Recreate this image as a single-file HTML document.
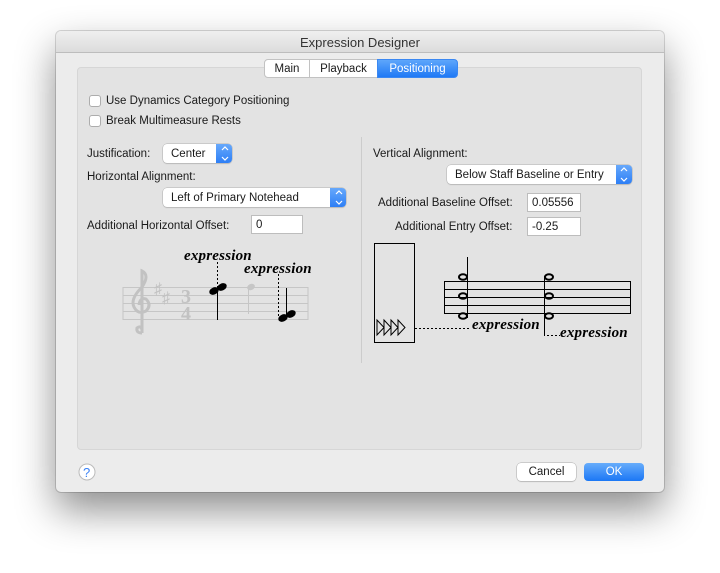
<!DOCTYPE html>
<html><head><style>
*{margin:0;padding:0;box-sizing:border-box}
body{width:720px;height:573px;background:#fff;position:relative;overflow:hidden;font-family:"Liberation Sans",sans-serif;font-size:11.5px;color:#1a1a1a}
.win{position:absolute;left:56px;top:31px;width:608px;height:461px;background:#ececec;border-radius:5px;box-shadow:0 18px 40px rgba(0,0,0,.45),0 0 0 1px rgba(0,0,0,.15)}
.title{position:absolute;left:0;top:0;width:608px;height:22px;background:linear-gradient(#efefef,#dcdcdc);border-bottom:1px solid #bdbdbd;border-radius:5px 5px 0 0;text-align:center;line-height:24px;font-size:13px;color:#333}
.a{position:absolute;white-space:nowrap}
.box{position:absolute;left:77px;top:67px;width:565px;height:383px;background:#e3e3e3;border:1px solid #d6d6d6;border-radius:4px}
.cb{position:absolute;width:12px;height:12px;background:#fff;border:1px solid #adadad;border-radius:3px}
.pop{position:absolute;height:19px;background:#fff;border-radius:4px;box-shadow:0 0 0 .5px #b0b0b0,0 1px 1px rgba(0,0,0,.15);padding-left:8px;line-height:20px}
.pop i{position:absolute;right:0;top:0;width:16px;height:19px;background:linear-gradient(#66a8fb,#2d7ff6);border-radius:0 4px 4px 0}
.fld{position:absolute;height:19px;background:#fff;border:1px solid #bdbdbd;padding-left:4px;line-height:18px}
.tab{position:absolute;top:59px;height:19px;line-height:19px;text-align:center;background:#fff;border:1px solid #c2c2c2}
</style></head><body>
<div class="win">
<div class="title">Expression Designer</div>
</div>
<div class="box"></div>
<div class="tab" style="left:264px;width:46px;border-radius:4px 0 0 4px">Main</div>
<div class="tab" style="left:309px;width:69px">Playback</div>
<div class="tab" style="left:377px;width:81px;border-radius:0 4px 4px 0;background:linear-gradient(#5ea6fb,#1f79f5);color:#fff;border-color:#3b88f2">Positioning</div>
<div class="cb" style="left:89px;top:95px"></div><div class="a" style="left:106px;top:95px">Use Dynamics Category Positioning</div>
<div class="cb" style="left:89px;top:115px"></div><div class="a" style="left:106px;top:115px">Break Multimeasure Rests</div>
<div style="position:absolute;left:361px;top:137px;width:1px;height:226px;background:#ccc"></div>
<div class="a" style="left:87px;top:148px">Justification:</div>
<div class="pop" style="left:163px;top:144px;width:69px">Center<i></i></div>
<div class="a" style="left:87px;top:171px">Horizontal Alignment:</div>
<div class="pop" style="left:163px;top:188px;width:183px">Left of Primary Notehead<i></i></div>
<div class="a" style="left:87px;top:220px">Additional Horizontal Offset:</div>
<div class="fld" style="left:251px;top:215px;width:52px">0</div>
<div class="a" style="left:373px;top:148px">Vertical Alignment:</div>
<div class="pop" style="left:447px;top:165px;width:185px">Below Staff Baseline or Entry<i></i></div>
<div class="a" style="left:378px;top:197px">Additional Baseline Offset:</div>
<div class="fld" style="left:527px;top:193px;width:54px">0.05556</div>
<div class="a" style="left:395px;top:221px">Additional Entry Offset:</div>
<div class="fld" style="left:527px;top:217px;width:54px">-0.25</div>
<svg class="a" style="left:0;top:0" width="720" height="573">
<g fill="none" stroke="#fff" stroke-width="1.2">
<path d="M222 150 l3 -3 3 3 M222 157 l3 3 3 -3"/>
<path d="M336 194 l3 -3 3 3 M336 201 l3 3 3 -3"/>
<path d="M621 171 l3 -3 3 3 M621 178 l3 3 3 -3"/>
</g>
<g stroke="#c6c6c6" stroke-width="1">
<line x1="123" y1="287.5" x2="308" y2="287.5"/><line x1="123" y1="295.5" x2="308" y2="295.5"/><line x1="123" y1="303.5" x2="308" y2="303.5"/><line x1="123" y1="311.5" x2="308" y2="311.5"/><line x1="123" y1="319.5" x2="308" y2="319.5"/>
<line x1="123" y1="287" x2="123" y2="320"/><line x1="308" y1="287" x2="308" y2="320"/>
<line x1="248.5" y1="288" x2="248.5" y2="314"/>
</g>
<path d="M142 333 q-6 0 -5 -5 q4 -3 5 2 M142 333 l0 -62 q8 4 0 16 q-12 12 -8 20 q4 8 12 4 q6 -6 0 -12 q-6 -2 -7 6" fill="none" stroke="#c2c2c2" stroke-width="3"/>
<text x="154" y="294" font-size="16" fill="#c2c2c2">♯</text><text x="162" y="303" font-size="16" fill="#c2c2c2">♯</text>
<text x="181" y="303" font-size="20" font-weight="bold" fill="#c2c2c2" font-family="Liberation Serif">3</text>
<text x="181" y="320" font-size="20" font-weight="bold" fill="#c2c2c2" font-family="Liberation Serif">4</text>
<ellipse cx="251" cy="287" rx="4" ry="3" fill="#c6c6c6" transform="rotate(-25 251 287)"/>
<g fill="#000">
<ellipse cx="214" cy="291" rx="5" ry="3.5" transform="rotate(-25 214 291)"/><ellipse cx="222" cy="287" rx="5" ry="3.5" transform="rotate(-25 222 287)"/>
<line x1="217.5" y1="290" x2="217.5" y2="320" stroke="#000"/>
<ellipse cx="283" cy="318" rx="5" ry="3.5" transform="rotate(-25 283 318)"/><ellipse cx="291" cy="314" rx="5" ry="3.5" transform="rotate(-25 291 314)"/>
<line x1="286.5" y1="288" x2="286.5" y2="316" stroke="#000"/>
</g>
<g stroke="#000" stroke-dasharray="2,2"><line x1="217.5" y1="262" x2="217.5" y2="288"/><line x1="278.5" y1="274" x2="278.5" y2="316"/>
<line x1="415" y1="328.5" x2="470" y2="328.5"/><line x1="547" y1="335.5" x2="560" y2="335.5"/></g>
<g font-family="Liberation Serif" font-style="italic" font-weight="bold" font-size="15" fill="#000" letter-spacing="0.2">
<text x="184" y="260">expression</text><text x="244" y="273">expression</text>
<text x="472" y="329">expression</text><text x="560" y="337">expression</text></g>
<rect x="374.5" y="243.5" width="40" height="99" fill="none" stroke="#000"/>
<g fill="none" stroke="#000"><path d="M377 320 l7 7.5 -7 7.5z M384 320 l7 7.5 -7 7.5z M391 320 l7 7.5 -7 7.5z M398 320 l7 7.5 -7 7.5z"/>
<line x1="444" y1="281.5" x2="631" y2="281.5"/><line x1="444" y1="289.5" x2="631" y2="289.5"/><line x1="444" y1="297.5" x2="631" y2="297.5"/><line x1="444" y1="305.5" x2="631" y2="305.5"/><line x1="444" y1="313.5" x2="631" y2="313.5"/>
<line x1="444.5" y1="281" x2="444.5" y2="314"/><line x1="630.5" y1="281" x2="630.5" y2="314"/>
<line x1="467.5" y1="257" x2="467.5" y2="318"/><line x1="544.5" y1="276" x2="544.5" y2="336"/>
<g stroke-width="2"><ellipse cx="463" cy="277" rx="4" ry="2.8"/><ellipse cx="463" cy="296" rx="4" ry="2.8"/><ellipse cx="463" cy="316" rx="4" ry="2.8"/>
<ellipse cx="549" cy="277" rx="4" ry="2.8"/><ellipse cx="549" cy="296" rx="4" ry="2.8"/><ellipse cx="549" cy="316" rx="4" ry="2.8"/></g></g>
<circle cx="87" cy="472" r="8" fill="#fff" stroke="#bbb"/>
<text x="83" y="477" font-size="13" fill="#3a82f6">?</text>
</svg>
<div class="a" style="left:517px;top:463px;width:59px;height:18px;background:#fff;border-radius:4px;box-shadow:0 0 0 .5px #aaa,0 1px 1px rgba(0,0,0,.15);text-align:center;line-height:18px">Cancel</div>
<div class="a" style="left:584px;top:463px;width:60px;height:18px;background:linear-gradient(#67acfb,#1b77f5);border-radius:4px;text-align:center;line-height:18px;color:#fff">OK</div>
</body></html>
